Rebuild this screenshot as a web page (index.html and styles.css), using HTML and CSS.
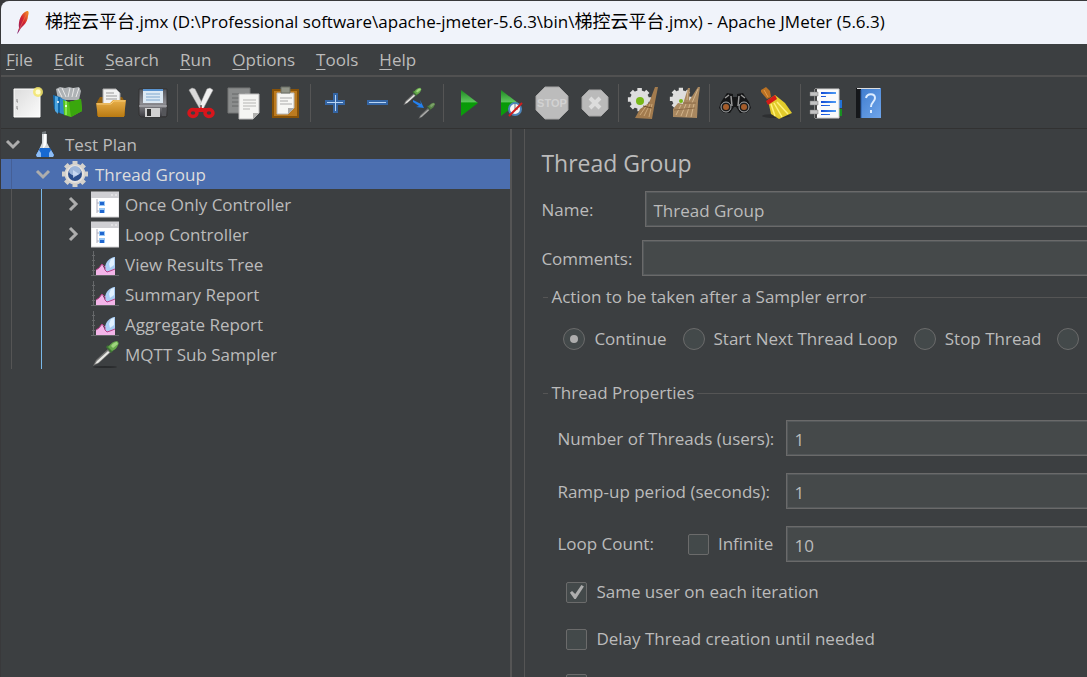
FILE: index.html
```html
<!DOCTYPE html>
<html lang="en">
<head>
<meta charset="utf-8">
<title>Apache JMeter (5.6.3)</title>
<link rel="stylesheet" href="styles.css">
</head>
<body>
<svg class="defs" aria-hidden="true">
  <defs>
    <linearGradient id="gGreen" x1="0" y1="0" x2="0" y2="1"><stop offset="0" stop-color="#1d8a20"/><stop offset=".45" stop-color="#5cc45c"/><stop offset=".5" stop-color="#089a08"/><stop offset="1" stop-color="#0c9c0c"/></linearGradient>
    <linearGradient id="gFolder" x1="0" y1="0" x2="0" y2="1"><stop offset="0" stop-color="#e9b04a"/><stop offset="1" stop-color="#b97a12"/></linearGradient>
    <linearGradient id="gDisk" x1="0" y1="0" x2="0" y2="1"><stop offset="0" stop-color="#55565c"/><stop offset=".5" stop-color="#8d8d92"/><stop offset="1" stop-color="#3b3b40"/></linearGradient>
    <linearGradient id="gPage" x1="0" y1="0" x2="1" y2="1"><stop offset="0" stop-color="#dcdcdc"/><stop offset="1" stop-color="#fbfbfb"/></linearGradient>
    <linearGradient id="gBar" x1="0" x2="1"><stop offset="0" stop-color="#0f49d6"/><stop offset="1" stop-color="#4f9df5"/></linearGradient>
    <linearGradient id="gBook" x1="0" y1="0" x2="1" y2="1"><stop offset="0" stop-color="#3a78cc"/><stop offset="1" stop-color="#6fa5ea"/></linearGradient>
    <linearGradient id="gFeather" x1="1" y1="0" x2="0" y2="1"><stop offset="0" stop-color="#f59b1c"/><stop offset=".45" stop-color="#d22030"/><stop offset="1" stop-color="#7b1d74"/></linearGradient>
    <g id="gearShape">
      <circle cx="14" cy="14" r="10.500"/>
      <path d="M11.500 1h5v26h-5zM1 11.500h26v5H1z"/>
      <path d="M11.500 1h5v26h-5zM1 11.500h26v5H1z" transform="rotate(45 14 14)"/>
    </g>
    <g id="pipette">
      <path d="M2 26l3-6L17 9l3 3L8 23z" fill="#777"/>
      <path d="M4 24l2-3L17 11l1.500 1.500L7 23z" fill="#e8e8e4"/>
      <path d="M15 7l5 6 2-2-5-6z" fill="#3e7434"/>
      <path d="M17 7c3-4 6-6 9-6 2 1 2 3 1 4-1 3-3 5-6 6z" fill="#66a94b"/>
      <path d="M20 6c2-3 4-4 6-4l1 2-5 4z" fill="#9fd67e"/>
    </g>
    <g id="winIcon">
      <path d="M0 2h28v25H0z" fill="#fff" stroke="#d4d4d6"/>
      <path d="M0 2h28v6H0z" fill="#cfcfd3"/>
      <path d="M20 4h2v2h-2zM24 4h2v2h-2z" fill="#e2e2e4"/>
      <path d="M6 9v14M6 13h4M6 21h4" stroke="#aab" fill="none"/>
      <path d="M8 11h6v5H8zM8 18h6v5H8z" fill="#9bc9f5"/>
      <path d="M9 12h4v3H9zM9 20h4v3H9z" fill="#1f66cf"/>
    </g>
    <g id="chartIcon">
      <path d="M2.500 1v25M1 5.500h3M1 10.500h3M1 15.500h3M1 20.500h3M0 25.500h28" stroke="#66686a" fill="none"/>
      <path d="M14 17c1-6 5-9 9-10h1v14l-7 3-3-3z" fill="#a9cdf4"/>
      <path d="M18 14l2-5 3-1v7l-4 3z" fill="#e1f1ff"/>
      <path d="M5 25v-5l3-2 3-4 3 6 2 2 3-1 5-2v6z" fill="#f3b5e9"/>
      <path d="M5 20l3-2 3-4 3 3v3l2 2 3-1 5-2" stroke="#b83e88" fill="none"/>
    </g>
  </defs>
</svg>

<div class="window">
  <header class="titlebar">
    <svg class="feather" viewBox="0 0 16 24" aria-hidden="true"><path d="M12 1c2 0 2 2 1 5 0 3-2 7-4 9l-3 3-3 5-1 1 2-6C3 11 6 3 12 1z" fill="url(#gFeather)"/><path d="M12 3L4 20" stroke="#f06a4a" stroke-width=".7"/></svg>
    <span class="titletext"><span class="cjk">梯控云平台</span>.jmx (D:\Professional software\apache-jmeter-5.6.3\bin\<span class="cjk">梯控云平台</span>.jmx) - Apache JMeter (5.6.3)</span>
  </header>

  <nav class="menubar" aria-label="Main menu">
    <button class="menu"><u>F</u>ile</button>
    <button class="menu"><u>E</u>dit</button>
    <button class="menu"><u>S</u>earch</button>
    <button class="menu"><u>R</u>un</button>
    <button class="menu"><u>O</u>ptions</button>
    <button class="menu"><u>T</u>ools</button>
    <button class="menu"><u>H</u>elp</button>
  </nav>

  <div class="toolbar" role="toolbar" aria-label="Tools">
    <button class="tool" aria-label="New"><svg viewBox="0 0 34 34"><path d="M4 3h26v28H4z" fill="url(#gPage)" stroke="#fff"/><path d="M7 13v3h1M7 20v3h1" stroke="#8a8a8a" fill="none"/><circle cx="28" cy="6" r="5" fill="#f5e669" opacity=".85"/><circle cx="28" cy="6" r="2.500" fill="#fffdd5"/></svg></button>
    <button class="tool" aria-label="Templates"><svg viewBox="0 0 34 34"><path d="M4 3l4-2 5 1 4-1 4 1 6-1 2 4-2 9H6z" fill="#aeb2b5"/><path d="M6 3l4 8M10 2l4 9M18 2l-2 9M22 2l-2 9M27 2l-3 9" stroke="#e9e9e9"/><path d="M1 9l7 2 5 4v14l-8-3-3-3z" fill="#1269ac"/><path d="M3 10l3 1v17l-3-3z" fill="#4ea5df"/><path d="M8 12l6 2v15l-6-2z" fill="#2f88c8"/><path d="M11 14l6 2 12-3 1 12-11 6-7-2z" fill="#57c21d"/><path d="M17 16l12-3 1 12-11 6z" fill="#3aa70d"/><path d="M14 15v14" stroke="#9af062" stroke-width="1.500"/><circle cx="6" cy="16" r="1" fill="#fff"/><circle cx="14" cy="20" r="1" fill="#fff"/></svg></button>
    <button class="tool" aria-label="Open"><svg viewBox="0 0 34 34"><path d="M3 16l3-5h22l3 5v14H3z" fill="#93600e"/><path d="M9 3h13l4 4v12H9z" fill="#f2f2f2" stroke="#aaa"/><path d="M12 7h8M12 10h11M12 13h11" stroke="#999"/><path d="M2 17h14l3-3h13l-2 17H4z" fill="url(#gFolder)"/><path d="M3 18h14l3-3h11" stroke="#f5cb7a" fill="none"/></svg></button>
    <button class="tool" aria-label="Save"><svg viewBox="0 0 34 34"><path d="M3 3h28v27l-1 1H5l-2-2z" fill="url(#gDisk)" stroke="#333"/><path d="M7 3h20v14H7z" fill="#dce9f4"/><path d="M7 3h20v2H7z" fill="#5a94d0"/><path d="M10 8h14M10 11h14M10 14h14" stroke="#7ea7cd"/><path d="M3 20h28" stroke="#c0c0c4"/><path d="M9 22h15v9H9z" fill="#d2d2d2"/><path d="M11 23h4v7h-4z" fill="#333"/><path d="M26 22l4 0v8h-4z" fill="#55565a"/></svg></button>
    <span class="sep"></span>
    <button class="tool" aria-label="Cut"><svg viewBox="0 0 34 34"><path d="M4 4l3-2 3 1 9 18-4 2z" fill="#dadada" stroke="#aaa" stroke-width=".5"/><path d="M28 4l-3-2-3 1-8 18 4 2z" fill="#f0f0f0" stroke="#aaa" stroke-width=".5"/><ellipse cx="8" cy="27" rx="4" ry="3.500" fill="none" stroke="#d8151b" stroke-width="3.500"/><ellipse cx="24" cy="27" rx="4" ry="3.500" fill="none" stroke="#d8151b" stroke-width="3.500"/><path d="M8 22h7l1-2 1 2h7l-5 4h-6z" fill="#d8151b"/><circle cx="16" cy="20" r="1" fill="#555"/></svg></button>
    <button class="tool" aria-label="Copy"><svg viewBox="0 0 34 34"><path d="M1 2h22v25H1z" fill="#8b8d8d" stroke="#747676"/><path d="M5 8h13M5 12h13M5 16h7M5 20h7" stroke="#676969"/><path d="M12 8h20v19l-6 6H12z" fill="#f5f5f3" stroke="#bbb"/><path d="M16 14h13M16 17h13M16 20h13M16 23h7" stroke="#b5b5b3"/><path d="M32 27h-6v6z" fill="#b0b0ae"/></svg></button>
    <button class="tool" aria-label="Paste"><svg viewBox="0 0 34 34"><path d="M4 4h25v27H4z" fill="#bb7a20" stroke="#875208" stroke-width="2"/><path d="M8 7h17v15l-6 6H8z" fill="#f6f6f4" stroke="#bbb"/><path d="M12 1h9v6h-9z" fill="#919488" stroke="#6b6e64"/><path d="M11 12h12M11 15h8M11 18h12" stroke="#aaa"/><path d="M25 22h-6v6z" fill="#aaa"/></svg></button>
    <span class="sep"></span>
    <button class="tool" aria-label="Expand all"><svg viewBox="0 0 34 34"><path d="M16 8h3v7h7v3h-7v8h-3v-8H8v-3h8z" fill="#b9d5f5" stroke="#3465a4" stroke-width="2"/></svg></button>
    <button class="tool" aria-label="Collapse all"><svg viewBox="0 0 34 34"><path d="M8 15h19v3H8z" fill="#b9d5f5" stroke="#3465a4" stroke-width="2"/></svg></button>
    <button class="tool" aria-label="Toggle"><svg viewBox="0 0 34 34"><use href="#pipette" transform="translate(0 1) scale(.7)"/><g opacity=".65"><use href="#pipette" transform="translate(15 16) scale(.65)"/></g><path d="M11 14l8 4-1-4 4 8-8-1 3-1-6-4z" fill="#2380ef"/></svg></button>
    <span class="sep"></span>
    <button class="tool" aria-label="Start"><svg viewBox="0 0 34 34"><path d="M10 4l17 13L10 30z" fill="url(#gGreen)"/></svg></button>
    <button class="tool" aria-label="Start no pauses"><svg viewBox="0 0 34 34"><path d="M8 4l17 13L8 30z" fill="url(#gGreen)"/><circle cx="22" cy="23" r="6" fill="#f7f7f7" stroke="#4e85ba" stroke-width="2"/><path d="M22 18v5h3" fill="none" stroke="#777"/><path d="M16 30l13-13" stroke="#d01c1c" stroke-width="2"/></svg></button>
    <button class="tool" aria-label="Stop" disabled><svg viewBox="0 0 34 34"><path d="M10 1h14l9 9v14l-9 9H10l-9-9V10z" fill="#bcbcbc" stroke="#a6a6a6"/><text class="stoptext" x="17" y="21" text-anchor="middle">STOP</text></svg></button>
    <button class="tool" aria-label="Shutdown" disabled><svg viewBox="0 0 34 34"><path d="M12 4h12l7 7v12l-7 7H12l-7-7V11z" fill="#bababa" stroke="#a6a6a6"/><path d="M13 12l10 10M23 12L13 22" stroke="#dcdcdc" stroke-width="4"/></svg></button>
    <span class="sep"></span>
    <button class="tool" aria-label="Clear"><svg viewBox="0 0 34 34"><use href="#gearShape" transform="translate(1 1) scale(.9)" fill="#dedede"/><circle cx="14" cy="15" r="4" fill="#78b818"/><path d="M29 1h3l-3 15-3 17-17-1 5-9 9-6z" fill="#a27b4e"/><path d="M14 29l7-10M18 30l6-12M23 31l3-13" stroke="#cba87a"/><path d="M17 20l9 2" stroke="#6f4e2a"/></svg></button>
    <button class="tool" aria-label="Clear all"><svg viewBox="0 0 34 34"><use href="#gearShape" transform="translate(1 1) scale(.85)" fill="#dedede"/><circle cx="13" cy="15" r="2" fill="#78b818"/><path d="M20 2h2l-1 13 9-14h2l-2 14-1 17-24-1 0-8 5-6 5 1z" fill="#a98860"/><path d="M8 29l5-10M13 30l5-12M18 31l4-13M23 31l3-13M30 3l-6 14M20 4l-1 10" stroke="#d2b48b"/><path d="M6 24l21-2M15 17l13 0" stroke="#8c6b47"/></svg></button>
    <span class="sep"></span>
    <button class="tool" aria-label="Search"><svg viewBox="0 0 34 34"><path d="M4 16l6-9 6 1v3h4V8l6-1 6 9 2 6-5 5h-6l-4-6h-2l-4 6H7l-5-5z" fill="#151617"/><path d="M8 12l4-3M14 10l1 10M28 12l-4-3M22 10l-1 10" stroke="#999" stroke-width="1.500"/><circle cx="9" cy="21" r="5" fill="#1c1c1c" stroke="#a5a8aa"/><circle cx="27" cy="21" r="5" fill="#1c1c1c" stroke="#a5a8aa"/><circle cx="9" cy="21" r="3" fill="#a55d2b"/><circle cx="27" cy="21" r="3" fill="#a55d2b"/></svg></button>
    <button class="tool" aria-label="Reset search"><svg viewBox="0 0 34 34"><ellipse cx="17" cy="30" rx="14" ry="2" fill="#2d2f31"/><path d="M2 4l5-3 4 4 1 6-4 2-6-7z" fill="#bb7223"/><path d="M5 4l4 7" stroke="#e39b4a"/><path d="M9 14l7-5 10 8 7 10-13 6-8-5z" fill="#e2cb2b"/><path d="M12 18l4 12M15 17l8 14M18 16l11 12" stroke="#fff079" stroke-width="1.500"/><path d="M7 15l9-6 2 4-9 6z" fill="#d31b17"/></svg></button>
    <span class="sep"></span>
    <button class="tool" aria-label="Function helper"><svg viewBox="0 0 34 34"><path d="M28 14h6v8h-6z" fill="#2272d8"/><path d="M28 23h6v7h-6z" fill="#179121"/><path d="M7 3h24v29H7z" fill="#fafafa" stroke="#cfcfcf"/><path d="M7 3h2v29H7z" fill="#444"/><path d="M2 6h8v4H2zM2 15h8v4H2zM2 24h8v4H2z" fill="#c3c3c3" stroke="#777" stroke-width=".5"/><path d="M13 6h15v2H13zM13 10h5v1h-5zM13 15h15v2H13zM13 19h9v1h-9zM13 24h15v2H13zM13 28h9v1h-9z" fill="url(#gBar)"/></svg></button>
    <button class="tool" aria-label="Help"><svg viewBox="0 0 34 34"><path d="M6 2h25v30H6z" fill="url(#gBook)"/><path d="M6 2h5v30H6z" fill="#15171a"/><path d="M7 2.500h23" stroke="#ddd"/><path d="M11 4v28" stroke="#2a5ca6"/><path d="M16 12c1-5 9-5 9 0 0 4-4 4-4 9M21 24v3" stroke="#dcecff" stroke-width="2" fill="none"/></svg></button>
  </div>

  <div class="main">
    <aside class="treepane">
      <ul class="tree" role="tree">
        <li role="treeitem" aria-expanded="true">
          <div class="row level1">
            <svg class="chev" viewBox="0 0 16 16"><path d="M2 5l6 6 6-6"/></svg>
            <svg class="icon" viewBox="0 0 28 28"><path d="M11 2l4-1v3h-4z" fill="#70777b"/><path d="M11 4h5v9l6 11v2H6v-2l5-11z" fill="#d2d7da"/><path d="M13 4h2v11l-3 4z" fill="#fff"/><path d="M9 18h10l4 7-1 2H6l-1-2z" fill="#1769d2"/><path d="M5 25l3-5 2 3v4H6zM23 25l-3-5-2 3v4h4z" fill="#8fbdf5"/></svg>
            <span>Test Plan</span>
          </div>
          <ul class="branch outer" role="group">
            <li role="treeitem" aria-expanded="true" aria-selected="true">
              <div class="row level2 selected">
                <svg class="chev" viewBox="0 0 16 16"><path d="M2 5l6 6 6-6"/></svg>
                <svg class="icon" viewBox="0 0 28 28"><use href="#gearShape" fill="#d5d2cc"/><circle cx="14" cy="14" r="9" fill="#e6e3df"/><circle cx="14" cy="14" r="7" fill="#2c4f8d"/><path d="M8 12a6 6 0 0 1 12 0c-3 5-9 5-12 0z" fill="#9db6da"/><path d="M12 10l6 4-6 4z" fill="#d9e7fb" opacity=".7"/></svg>
                <span>Thread Group</span>
              </div>
              <ul class="branch inner" role="group">
                <li role="treeitem"><div class="row level3"><svg class="chev" viewBox="0 0 16 16"><path d="M5 2l6 6-6 6"/></svg><svg class="icon" viewBox="0 0 28 28"><use href="#winIcon"/></svg><span>Once Only Controller</span></div></li>
                <li role="treeitem"><div class="row level3"><svg class="chev" viewBox="0 0 16 16"><path d="M5 2l6 6-6 6"/></svg><svg class="icon" viewBox="0 0 28 28"><use href="#winIcon"/></svg><span>Loop Controller</span></div></li>
                <li role="treeitem"><div class="row level3"><i class="chev"></i><svg class="icon" viewBox="0 0 28 28"><use href="#chartIcon"/></svg><span>View Results Tree</span></div></li>
                <li role="treeitem"><div class="row level3"><i class="chev"></i><svg class="icon" viewBox="0 0 28 28"><use href="#chartIcon"/></svg><span>Summary Report</span></div></li>
                <li role="treeitem"><div class="row level3"><i class="chev"></i><svg class="icon" viewBox="0 0 28 28"><use href="#chartIcon"/></svg><span>Aggregate Report</span></div></li>
                <li role="treeitem"><div class="row level3"><i class="chev"></i><svg class="icon" viewBox="0 0 28 28"><ellipse cx="14" cy="27" rx="12" ry="1" fill="#292b2d"/><use href="#pipette"/></svg><span>MQTT Sub Sampler</span></div></li>
              </ul>
            </li>
          </ul>
        </li>
      </ul>
    </aside>

    <section class="panel">
      <form class="form">
        <h1 class="heading">Thread Group</h1>
        <div class="field name"><label for="name">Name:</label><input class="text" id="name" type="text" value="Thread Group"></div>
        <div class="field comments"><label for="comments">Comments:</label><input class="text" id="comments" type="text"></div>

        <fieldset class="group actions">
          <legend>Action to be taken after a Sampler error</legend>
          <div class="radios">
            <label class="option"><input type="radio" name="action" checked>Continue</label>
            <label class="option"><input type="radio" name="action">Start Next Thread Loop</label>
            <label class="option"><input type="radio" name="action">Stop Thread</label>
            <label class="option"><input type="radio" name="action" aria-label="Stop thread group"></label>
          </div>
        </fieldset>

        <fieldset class="group properties">
          <legend>Thread Properties</legend>
          <div class="grid">
            <label for="threads">Number of Threads (users):</label><input class="text" id="threads" type="text" value="1">
            <label for="ramp">Ramp-up period (seconds):</label><input class="text" id="ramp" type="text" value="1">
            <div class="loop"><label for="loops">Loop Count:</label><label class="option"><input type="checkbox">Infinite</label></div><input class="text" id="loops" type="text" value="10">
          </div>
          <div class="checks">
            <label class="option"><input type="checkbox" checked>Same user on each iteration</label>
            <label class="option"><input type="checkbox">Delay Thread creation until needed</label>
            <label class="option"><input type="checkbox" aria-label="Thread lifetime"></label>
          </div>
        </fieldset>
      </form>
    </section>
  </div>
</div>
</body>
</html>
```

FILE: styles.css
```css
* { box-sizing: border-box; }

body {
  margin: 0;
  height: 100vh;
  overflow: hidden;
  padding: 1px 0 0 1px;
  background: #39393b;
  color: #bbbbbb;
  font-family: "Open Sans", "Noto Sans CJK SC", sans-serif;
  font-size: 17px;
  line-height: 24px;
}

.defs { position: absolute; width: 0; height: 0; }

.window {
  display: flex;
  flex-direction: column;
  height: 100%;
  background: #3c3f41;
  border-top-left-radius: 8px;
  overflow: hidden;
}

.titlebar {
  display: flex;
  align-items: center;
  flex: none;
  height: 43px;
  padding: 0 0 2px 14px;
  gap: 14px;
  background: #f0f3fa;
  color: #000;
  white-space: nowrap;
}
.feather { width: 16px; height: 24px; }
.cjk { font-size: 18px; }

.menubar {
  display: flex;
  flex: none;
  height: 33px;
  padding: 1px 0 0 5px;
  gap: 21px;
  border-bottom: 2px solid #515151;
}
.menu {
  padding: 0;
  border: 0;
  background: none;
  color: inherit;
  font: inherit;
}
.menu u { text-underline-offset: 3px; text-decoration-thickness: 1px; }

.toolbar {
  display: flex;
  align-items: center;
  flex: none;
  height: 52px;
  padding-left: 5px;
  border-bottom: 1px solid #323232;
}
.tool {
  display: grid;
  place-items: center;
  flex: none;
  width: 42px;
  height: 42px;
  padding: 0;
  border: 0;
  background: none;
}
.tool svg { width: 34px; height: 34px; }
.sep { flex: none; width: 1px; height: 38px; margin: 0 3px; background: #555555; }
.stoptext { font: 700 11px "Liberation Sans", sans-serif; fill: #d2d2d2; }

.main { display: flex; flex: 1; min-height: 0; }
.treepane { flex: 0 0 calc(47% + 1px); border-right: 2px solid #555555; overflow: hidden; }
.tree, .branch { margin: 0; padding: 0; list-style: none; }
.outer { background: linear-gradient(#555555, #555555) 10px 0 / 1px 100% no-repeat; }
.inner { background: linear-gradient(#79b8e8, #79b8e8) 40px 0 / 1px 100% no-repeat; }
.row {
  display: flex;
  align-items: center;
  height: 30px;
  padding-left: 4px;
  white-space: nowrap;
}
.row span { padding: 2px 0 0 6px; }
.level2 { padding-left: 34px; }
.level3 { padding-left: 64px; }
.selected {
  color: #dddddd;
  background: linear-gradient(#455f96, #455f96) 10px 0 / 1px 100% no-repeat #4b6eaf;
}
.chev { flex: none; width: 16px; height: 16px; margin-right: 10px; fill: none; stroke: #adadad; stroke-width: 3px; }
.icon { flex: none; width: 28px; height: 28px; }

.panel {
  flex: 1;
  min-width: 0;
  margin-left: 12px;
  border-left: 1px solid #555555;
  overflow: hidden;
}
.form { width: calc(100% + 40px); padding: 18px 0 0 16px; }
.heading { margin: 0; font-size: 23px; font-weight: 400; line-height: 32px; }
.field { display: flex; align-items: center; }
.field label { padding-top: 2px; }
.name { margin-top: 12px; gap: 14px; }
.name label { width: 90px; }
.comments { margin-top: 13px; gap: 12px; }
.comments label { width: 89px; }
.text {
  flex: 1;
  min-width: 0;
  height: 36px;
  padding: 2px 7px 0;
  border: 1px solid #6a6a6a;
  box-shadow: inset 0 0 0 1px #54585a;
  background: #45494a;
  color: #bbbbbb;
  font: inherit;
}

.group {
  min-width: 0;
  margin: 0 0 0 2px;
  padding: 0;
  border: 0 solid #555555;
  border-top-width: 1px;
}
.group legend { margin-left: 5px; padding: 0 3px; }
.actions { margin-top: 9px; height: 96px; }
.radios { display: flex; gap: 16px; padding: 18px 0 0 20px; }
.option { display: flex; align-items: center; gap: 9px; white-space: nowrap; }
.option input {
  appearance: none;
  display: grid;
  place-items: center;
  flex: none;
  width: 21px;
  height: 21px;
  margin: 0;
  border: 1px solid #6b6b6b;
  border-radius: 2px;
  background: #43494a;
}
.option input[type="radio"] { width: 22px; height: 22px; border-radius: 50%; }
.option input[type="radio"]:checked::before {
  content: "";
  width: 8px;
  height: 8px;
  border-radius: 50%;
  background: #adadad;
}
.option input[type="checkbox"]:checked::before {
  content: "";
  width: 14px;
  height: 14px;
  background: #adadad;
  clip-path: polygon(0 55%, 15% 42%, 38% 65%, 82% 0, 100% 10%, 42% 100%, 32% 100%);
}

.grid {
  display: grid;
  grid-template-columns: 229px 1fr;
  row-gap: 17px;
  align-items: center;
  padding: 15px 0 0 14px;
}
.grid > label { padding-top: 2px; }
.loop { display: flex; justify-content: space-between; padding-right: 13px; }
.checks { display: grid; gap: 23px; padding: 18px 0 0 23px; }
```
